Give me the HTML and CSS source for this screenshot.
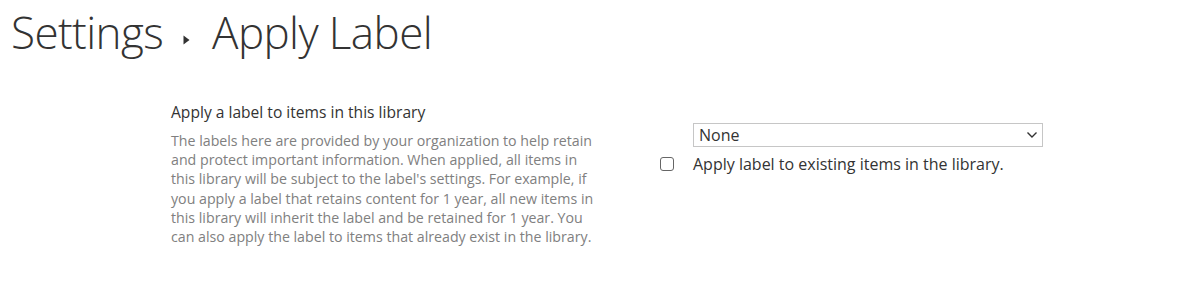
FILE: index.html
```html
<!DOCTYPE html>
<html>
<head>
<meta charset="utf-8">
<link rel="stylesheet" href="styles.css">
</head>
<body>
<div class="page">
  <h1 class="title"><span>Settings</span><span class="sep"><svg width="7" height="10" viewBox="0 0 7 10"><path d="M0.5 0.5 L6.5 5 L0.5 9.5 Z" fill="#333"/></svg></span><span>Apply Label</span></h1>
  <div class="section">
    <div class="left">
      <h2 class="heading">Apply a label to items in this library</h2>
      <p class="desc">The labels here are provided by your organization to help retain<br>and protect important information. When applied, all items in<br>this library will be subject to the label's settings. For example, if<br>you apply a label that retains content for 1 year, all new items in<br>this library will inherit the label and be retained for 1 year. You<br>can also apply the label to items that already exist in the library.</p>
    </div>
    <div class="right">
      <div class="select"><span>None</span><svg class="chev" width="12" height="8" viewBox="0 0 12 8"><path d="M1.5 1.5 L6 6 L10.5 1.5" fill="none" stroke="#333" stroke-width="1.4"/></svg></div>
      <label class="check"><span class="box"></span><span>Apply label to existing items in the library.</span></label>
    </div>
  </div>
</div>
</body>
</html>
```

FILE: styles.css
```css
html, body {
  margin: 0;
  padding: 0;
  background: #fff;
}
.page {
  font-family: "Open Sans", "Noto Sans", sans-serif;
  color: #333;
}
.title {
  margin: 0;
  padding: 4px 0 0 11px;
  font-weight: 300;
  font-size: 44px;
  line-height: 56px;
  color: #333;
  display: flex;
  align-items: center;
  letter-spacing: -0.6px;
}
.sep {
  display: inline-flex;
  align-items: center;
  margin: 16px 22px 0 20px;
}
.section {
  display: grid;
  grid-template-columns: 489px 1fr;
  margin: 42px 0 0 171px;
}
.heading {
  margin: 0;
  font-weight: 400;
  font-size: 15.6px;
  line-height: 20px;
  color: #333;
}
.desc {
  margin: 9px 0 0 0;
  font-size: 14.2px;
  line-height: 19.2px;
  color: #808080;
}
.right {
  padding-top: 21px;
  display: flex;
  flex-direction: column;
}
.select {
  margin-left: 33px;
  width: 350px;
  height: 24px;
  box-sizing: border-box;
  border: 1px solid #c6c6c6;
  display: flex;
  align-items: center;
  justify-content: space-between;
  padding: 0 4px 0 5px;
  font-size: 16px;
  color: #333;
}
.check {
  display: flex;
  align-items: center;
  margin-top: 7px;
  font-size: 16px;
  line-height: 20px;
  color: #333;
}
.box {
  width: 14px;
  height: 14px;
  box-sizing: border-box;
  border: 1px solid #666;
  border-radius: 3px;
  margin-right: 19px;
}
```
